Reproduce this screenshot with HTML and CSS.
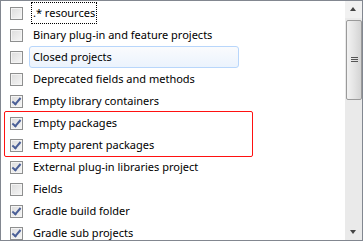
FILE: index.html
```html
<!DOCTYPE html>
<html lang="en">
<head>
    <meta charset="UTF-8">
    <title>Filters</title>
    <link rel="stylesheet" href="styles.css">
</head>
<body>
    <div class="listbox">
        <ul class="items">
            <li class="item"><span class="box"></span><span class="label focus">.* resources</span></li>
            <li class="item"><span class="box"></span><span class="label">Binary plug-in and feature projects</span></li>
            <li class="item"><span class="box"></span><span class="label hover">Closed projects</span></li>
            <li class="item"><span class="box"></span><span class="label">Deprecated fields and methods</span></li>
            <li class="item"><span class="box checked"></span><span class="label">Empty library containers</span></li>
            <li class="group">
                <div class="item"><span class="box checked"></span><span class="label">Empty packages</span></div>
                <div class="item"><span class="box checked"></span><span class="label">Empty parent packages</span></div>
            </li>
            <li class="item"><span class="box checked"></span><span class="label">External plug-in libraries project</span></li>
            <li class="item"><span class="box"></span><span class="label">Fields</span></li>
            <li class="item"><span class="box checked"></span><span class="label">Gradle build folder</span></li>
            <li class="item"><span class="box checked"></span><span class="label">Gradle sub projects</span></li>
        </ul>
        <div class="scrollbar">
            <div class="arrow up"></div>
            <div class="track">
                <div class="thumb"><span class="grip"></span></div>
            </div>
            <div class="arrow down"></div>
        </div>
    </div>
</body>
</html>
```
FILE: styles.css
```css
body {
    margin: 0;
    padding: 0;
    background: #fff;
    font-family: "Noto Sans", "Open Sans", sans-serif;
    font-size: 11px;
    color: #000;
}
.listbox {
    width: 363px;
    height: 241px;
    box-sizing: border-box;
    border: 1px solid #828790;
    display: flex;
    overflow: hidden;
}
.items {
    list-style: none;
    margin: 0;
    padding: 1px 0 0 0;
    flex: 1;
}
.item {
    height: 22px;
    display: flex;
    align-items: center;
}
.box {
    width: 11px;
    height: 11px;
    margin-left: 9px;
    margin-right: 8px;
    border: 1px solid #8e8f8f;
    background: linear-gradient(135deg, #dcdcdc 0%, #f6f6f6 100%);
    box-shadow: inset 0 0 0 1px #f4f4f4;
    position: relative;
    flex: none;
}
.box.checked::after {
    content: "";
    position: absolute;
    left: 3px;
    top: 0px;
    width: 3px;
    height: 7px;
    border-right: 2px solid #4a5f97;
    border-bottom: 2px solid #4a5f97;
    transform: rotate(40deg);
}
.label {
    padding: 1px 1px;
    line-height: 18px;
    border: 1px solid transparent;
    white-space: nowrap;
}
.focus {
    border: 1px dotted #000;
}
.hover {
    box-sizing: border-box;
    margin-left: -2px;
    width: 210px;
    padding-left: 3px;
    border: 1px solid #b8d6fb;
    border-radius: 3px;
    background: linear-gradient(#fafbfd, #ebf3fd);
}
.group {
    margin: -1px 92px -1px 3px;
    border: 1px solid #f11;
    border-radius: 2px;
}
.group .box {
    margin-left: 5px;
}
.scrollbar {
    width: 17px;
    flex: none;
    display: flex;
    flex-direction: column;
    background: #eaeaea;
}
.arrow {
    height: 17px;
    position: relative;
}
.arrow::after {
    content: "";
    position: absolute;
    left: 5px;
    border-left: 3px solid transparent;
    border-right: 3px solid transparent;
}
.arrow.up {
    background: #f1f1f1;
}
.arrow.up::after {
    top: 6px;
    border-bottom: 4px solid #444;
}
.arrow.down::after {
    top: 7px;
    border-top: 4px solid #444;
}
.track {
    flex: 1;
    padding-top: 2px;
}
.thumb {
    height: 78px;
    margin: 0 0 0 1px;
    border: 1px solid #9a9a9a;
    border-radius: 2px;
    background: linear-gradient(90deg, #f2f2f2, #e4e4e4 50%, #d4d4d4);
    display: flex;
    align-items: center;
    justify-content: center;
}
.grip {
    width: 7px;
    height: 6px;
    background: repeating-linear-gradient(#555 0 1px, transparent 1px 2px);
}
```
